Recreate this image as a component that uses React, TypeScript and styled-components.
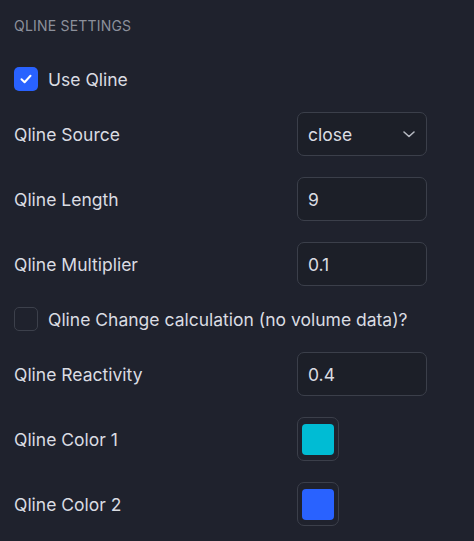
import styled, { createGlobalStyle } from "styled-components";

const GlobalStyle = createGlobalStyle`
  html, body {
    margin: 0;
    padding: 0;
    background: #1f222d;
  }
  body {
    font-family: Inter, "Noto Sans", sans-serif;
    color: #dadce2;
  }
`;

const Panel = styled.div`
  box-sizing: border-box;
  width: 474px;
  height: 541px;
  padding: 17px 14px 0 14px;
  display: flex;
  flex-direction: column;
  gap: 21px;
  overflow: hidden;
`;

const Heading = styled.div`
  height: 18px;
  line-height: 18px;
  font-size: 14px;
  letter-spacing: 0.2px;
  color: #8c909b;
  text-transform: uppercase;
  margin-bottom: 11px;
`;

const Row = styled.div<{ $tall?: boolean }>`
  display: flex;
  align-items: center;
  height: ${(p) => (p.$tall ? "44px" : "24px")};
`;

const Label = styled.div`
  width: 283px;
  flex-shrink: 0;
  font-size: 17.5px;
  color: #dadce2;
`;

const CheckBox = styled.div<{ $checked?: boolean }>`
  box-sizing: border-box;
  width: 24px;
  height: 24px;
  border-radius: 5px;
  margin-right: 10px;
  display: flex;
  align-items: center;
  justify-content: center;
  background: ${(p) => (p.$checked ? "#2962ff" : "transparent")};
  border: ${(p) => (p.$checked ? "none" : "1.5px solid #3c404b")};
`;

const CheckText = styled.span`
  font-size: 17.5px;
  color: #dadce2;
`;

const Field = styled.div`
  box-sizing: border-box;
  width: 130px;
  height: 44px;
  border: 1px solid #3b3f4a;
  border-radius: 7px;
  background: #1c1f28;
  display: flex;
  align-items: center;
  justify-content: space-between;
  padding: 0 10px 0 10px;
  font-size: 17.5px;
  color: #dadce2;
`;

const Swatch = styled.div`
  box-sizing: border-box;
  width: 42px;
  height: 44px;
  border: 1px solid #3b3f4a;
  border-radius: 7px;
  display: flex;
  align-items: center;
  justify-content: center;
`;

const SwatchFill = styled.div<{ $color: string }>`
  width: 32px;
  height: 31px;
  border-radius: 4px;
  background: ${(p) => p.$color};
`;

const Check = () => (
  <svg width="14" height="14" viewBox="0 0 14 14" fill="none">
    <path
      d="M2.5 7.2 L5.6 10.2 L11.5 3.8"
      stroke="#fff"
      strokeWidth="2"
      strokeLinecap="round"
      strokeLinejoin="round"
    />
  </svg>
);

const Chevron = () => (
  <svg width="14" height="10" viewBox="0 0 14 10" fill="none">
    <path
      d="M2 3 L7 7.5 L12 3"
      stroke="#b5b8c0"
      strokeWidth="1.6"
      strokeLinecap="round"
      strokeLinejoin="round"
    />
  </svg>
);

const App: React.FC = () => {
  return (
    <>
      <GlobalStyle />
      <Panel>
        <Heading>Qline Settings</Heading>
        <Row>
          <CheckBox $checked>
            <Check />
          </CheckBox>
          <CheckText>Use Qline</CheckText>
        </Row>
        <Row $tall>
          <Label>Qline Source</Label>
          <Field>
            close
            <Chevron />
          </Field>
        </Row>
        <Row $tall>
          <Label>Qline Length</Label>
          <Field>9</Field>
        </Row>
        <Row $tall>
          <Label>Qline Multiplier</Label>
          <Field>0.1</Field>
        </Row>
        <Row>
          <CheckBox />
          <CheckText>Qline Change calculation (no volume data)?</CheckText>
        </Row>
        <Row $tall>
          <Label>Qline Reactivity</Label>
          <Field>0.4</Field>
        </Row>
        <Row $tall>
          <Label>Qline Color 1</Label>
          <Swatch>
            <SwatchFill $color="#00bcd4" />
          </Swatch>
        </Row>
        <Row $tall>
          <Label>Qline Color 2</Label>
          <Swatch>
            <SwatchFill $color="#2962ff" />
          </Swatch>
        </Row>
      </Panel>
    </>
  );
};

export default App;
